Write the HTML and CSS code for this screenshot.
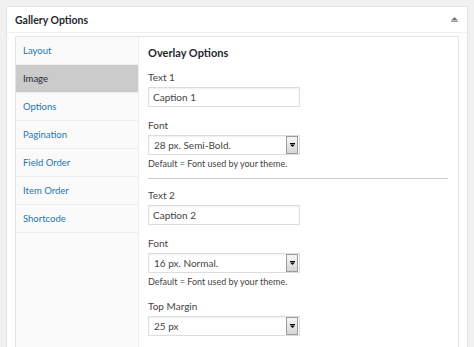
FILE: index.html
```html
<!DOCTYPE html>
<html lang="en">
<head>
<meta charset="utf-8">
<title>Gallery Options</title>
<link rel="stylesheet" href="styles.css">
</head>
<body>
<div class="postbox">
  <div class="postbox-header">
    <h2 class="postbox-title">Gallery Options</h2>
    <span class="toggle">
      <svg width="7" height="5" viewBox="0 0 7 5"><path d="M3.5 0L7 3.5H0z" fill="#72777c"/><rect x="0" y="4" width="7" height="1" fill="#9a9ea2"/></svg>
    </span>
  </div>
  <div class="postbox-body">
    <div class="options">
      <ul class="tabs">
        <li class="tab">Layout</li>
        <li class="tab active">Image</li>
        <li class="tab">Options</li>
        <li class="tab">Pagination</li>
        <li class="tab">Field Order</li>
        <li class="tab">Item Order</li>
        <li class="tab">Shortcode</li>
      </ul>
      <div class="panel">
        <h3 class="panel-title">Overlay Options</h3>
        <div class="field">
          <label class="label">Text 1</label>
          <input class="text-input" type="text" value="Caption 1">
        </div>
        <div class="field">
          <label class="label">Font</label>
          <div class="select"><span class="select-value">28 px. Semi-Bold.</span><span class="select-arrow"><svg width="5" height="4" viewBox="0 0 5 4"><rect x="0" y="0" width="5" height="1" fill="#000"/><path d="M0 1.5H5L2.5 4z" fill="#000"/></svg></span></div>
          <p class="desc">Default = Font used by your theme.</p>
        </div>
        <hr class="divider">
        <div class="field">
          <label class="label">Text 2</label>
          <input class="text-input" type="text" value="Caption 2">
        </div>
        <div class="field">
          <label class="label">Font</label>
          <div class="select"><span class="select-value">16 px. Normal.</span><span class="select-arrow"><svg width="5" height="4" viewBox="0 0 5 4"><rect x="0" y="0" width="5" height="1" fill="#000"/><path d="M0 1.5H5L2.5 4z" fill="#000"/></svg></span></div>
          <p class="desc">Default = Font used by your theme.</p>
        </div>
        <div class="field">
          <label class="label">Top Margin</label>
          <div class="select"><span class="select-value">25 px</span><span class="select-arrow"><svg width="5" height="4" viewBox="0 0 5 4"><rect x="0" y="0" width="5" height="1" fill="#000"/><path d="M0 1.5H5L2.5 4z" fill="#000"/></svg></span></div>
        </div>
      </div>
    </div>
  </div>
</div>
</body>
</html>
```

FILE: styles.css
```css
* { box-sizing: border-box; }
html, body { margin: 0; padding: 0; }
body {
  background: #f1f1f1;
  padding: 6px 6px 0 6px;
  font-family: Lato, "Open Sans", sans-serif;
  color: #444;
  overflow: hidden;
  height: 347px;
}
.postbox {
  background: #fff;
  border: 1px solid #e5e5e5;
  box-shadow: 0 1px 1px rgba(0,0,0,0.04);
}
.postbox-header {
  display: flex;
  align-items: center;
  justify-content: space-between;
  height: 26px;
  padding: 0 9px 0 8px;
  border-bottom: 1px solid #eee;
}
.postbox-title {
  margin: 0;
  font-size: 10.5px;
  font-weight: 700;
  color: #23282d;
  line-height: 14px;
}
.toggle { display: flex; margin-top: -1px; }
.postbox-body { padding: 3px 8px 0 8px; }
.options {
  display: flex;
  border: 1px solid #e5e5e5;
}
.tabs {
  list-style: none;
  margin: 0;
  padding: 0;
  width: 123px;
  flex: none;
  background: #fafafa;
  border-right: 1px solid #eee;
}
.tab {
  height: 28px;
  line-height: 27px;
  padding-left: 7px;
  font-size: 9.5px;
  color: #1e77ad;
  border-bottom: 1px solid #eee;
}
.tab.active {
  background: #cbcbcb;
  color: #23282d;
}
.panel {
  flex: 1;
  padding: 8px 10px 20px 9px;
}
.panel-title {
  margin: 0 0 9px 0;
  font-size: 11px;
  line-height: 16px;
  font-weight: 700;
  color: #23282d;
}
.field { margin-bottom: 11px; }
.label {
  display: block;
  font-size: 10px;
  line-height: 14px;
  margin-bottom: 3px;
  color: #444;
}
.text-input {
  display: block;
  width: 152px;
  height: 20px;
  margin: 0;
  padding: 0 4px;
  border: 1px solid #ddd;
  box-shadow: inset 0 1px 2px rgba(0,0,0,0.07);
  font-family: Lato, "Open Sans", sans-serif;
  font-size: 10px;
  color: #444;
  outline: none;
}
.select {
  display: flex;
  align-items: center;
  width: 152px;
  height: 20px;
  border: 1px solid #ddd;
  box-shadow: inset 0 1px 2px rgba(0,0,0,0.07);
  padding: 0 1px 0 5px;
}
.select-value {
  flex: 1;
  font-size: 10px;
  color: #444;
}
.select-arrow {
  width: 12px;
  height: 18px;
  display: flex;
  align-items: center;
  justify-content: center;
  border: 1px solid #9c9c9c;
  background: linear-gradient(#f6f6f6, #d6d6d6);
}
.desc {
  margin: 3px 0 0 0;
  font-size: 9px;
  line-height: 12px;
  color: #444;
}
.divider {
  border: 0;
  border-top: 1px solid #ccc;
  margin: -3px 0 9px 0;
}
```
